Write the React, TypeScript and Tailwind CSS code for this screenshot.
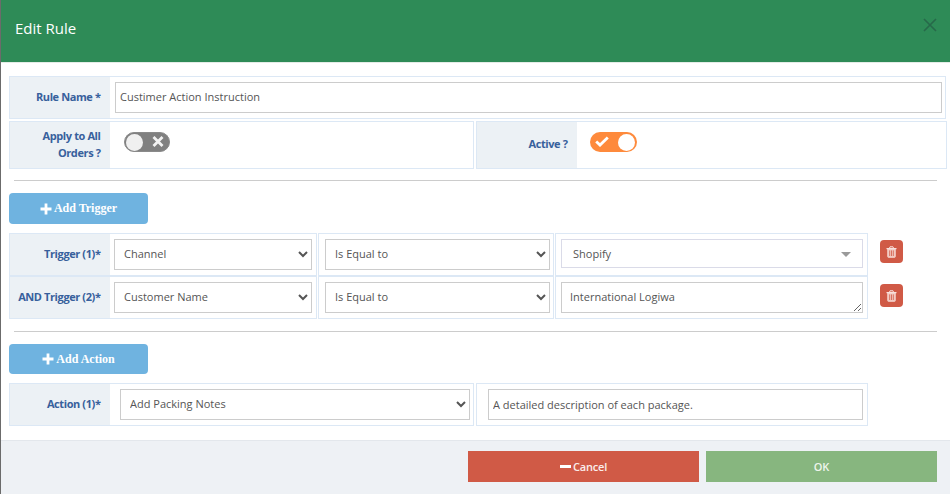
import React from "react";

const OS = "font-['Open_Sans','Noto_Sans',sans-serif]";
const cell = "border border-[#dce8f5] flex bg-white";
const labelC = "w-[100px] shrink-0 bg-[#ecf1f5] text-[11px] leading-[16.5px] font-bold tracking-[-0.4px] text-[#37609c] text-right pr-[9.5px] flex justify-end";
const ctl = "h-full w-full border border-[#cccccc] bg-white text-[11px] text-[#555555] outline-none " + OS;

function Plus() {
  return (
    <svg width="12" height="12" viewBox="0 0 12 12" className="shrink-0">
      <path d="M4.6 0.5h2.8v4.1h4.1v2.8H7.4v4.1H4.6V7.4H0.5V4.6h4.1z" fill="#fff" />
    </svg>
  );
}

function Trash() {
  return (
    <button className="w-[23px] h-[23px] rounded-[4px] bg-[#d05a46] flex items-center justify-center">
      <svg width="11" height="12" viewBox="0 0 11 12" fill="none">
        <path d="M0.5 2.6h10" stroke="#f8e2dd" strokeWidth="1.2" />
        <path d="M3.4 2.4l.6-1.6h3l.6 1.6" stroke="#f8e2dd" strokeWidth="1" />
        <path d="M1.6 3h7.8v7.4c0 .6-.4 1-1 1H2.6c-.6 0-1-.4-1-1z" fill="#f3c9c1" stroke="#f8e2dd" strokeWidth="0.6" />
        <path d="M3.7 4.4v5.6M5.5 4.4v5.6M7.3 4.4v5.6" stroke="#d05a46" strokeWidth="0.8" />
      </svg>
    </button>
  );
}

function AddBtn({ text, h }: { text: string; h: string }) {
  return (
    <button className={h + " w-[139px] rounded-[4px] bg-[#6fb3e0] flex items-center justify-center gap-[2px] text-white text-[12px] font-bold font-['Liberation_Serif',serif]"}>
      <Plus />
      <span className="-mt-[1px]">{text}</span>
    </button>
  );
}

function Sel({ value }: { value: string }) {
  return (
    <select defaultValue={value} className={ctl + " pl-[5px] pb-[2px]"}>
      <option>{value}</option>
    </select>
  );
}

export default function App() {
  return (
    <div className={"w-[950px] h-[494px] overflow-hidden bg-white border-l border-[#6b6b6b] flex flex-col " + OS}>
      <div className="h-[63px] shrink-0 bg-[#2e8b57] border-b border-[#e4ece7] flex items-center justify-between pl-[14px] pr-[13px]">
        <span className="text-white text-[15px] font-medium -mt-[5px]">Edit Rule</span>
        <svg width="14" height="14" viewBox="0 0 14 14" className="-mt-[12px]" stroke="#27694a" strokeWidth="1.6" fill="none">
          <path d="M1 1l12 12M13 1L1 13" />
        </svg>
      </div>

      <div className="flex-1 pl-[8px] pt-[13px] flex flex-col items-start">
        <div className={cell + " w-[937px] h-[43px]"}>
          <div className={labelC + " items-center"}>Rule Name *</div>
          <div className="flex-1 pl-[5px] pr-[3px] py-[5px]">
            <input defaultValue="Custimer Action Instruction" className={ctl + " pl-[4px] pb-[2px]"} />
          </div>
        </div>

        <div className="flex gap-[2px] mt-[2px] h-[48px]">
          <div className={cell + " w-[465px]"}>
            <div className={labelC + " items-start pt-[6px]"}>Apply to All<br />Orders ?</div>
            <div className="pl-[14px] pt-[10px]">
              <div className="w-[46px] h-[20px] rounded-full bg-[#808080] border border-[#8a8a8a] flex items-center justify-between pl-[1px] pr-[5px]">
                <span className="w-[17px] h-[17px] rounded-full bg-[#f0f0f0]" />
                <svg width="12" height="11" viewBox="0 0 12 11" stroke="#f2f2f2" strokeWidth="2.8" fill="none" className="-mt-[2px]">
                  <path d="M1.5 1l9 9M10.5 1l-9 9" />
                </svg>
              </div>
            </div>
          </div>
          <div className={cell + " w-[471px]"}>
            <div className={labelC + " items-center pb-[2px]"}>Active ?</div>
            <div className="pl-[13px] pt-[10px]">
              <div className="w-[47px] h-[20px] rounded-full bg-[#fe8a3c] flex items-center justify-between pl-[5px] pr-[1px]">
                <svg width="14" height="11" viewBox="0 0 14 11" stroke="#fff" strokeWidth="2.8" fill="none" className="-mt-[2px]">
                  <path d="M1.2 5.5l3.8 3.6L12.8 1.4" />
                </svg>
                <span className="w-[17px] h-[17px] rounded-full bg-white mr-[1px]" />
              </div>
            </div>
          </div>
        </div>

        <div className="mt-[11px] ml-[5px] w-[923px] h-px bg-[#cccccc]" />
        <div className="mt-[12px]"><AddBtn text="Add Trigger" h="h-[31px]" /></div>

        <div className="mt-[9px] flex flex-col">
          <div className="flex items-start h-[43px]">
            <div className={cell + " w-[308px] h-[43px]"}>
              <div className={labelC + " items-center"}>Trigger (1)*</div>
              <div className="flex-1 pl-[4px] pr-[4px] py-[5px]"><Sel value="Channel" /></div>
            </div>
            <div className={cell + " w-[236px] h-[43px] ml-[1px]"}>
              <div className="flex-1 pl-[6px] pr-[3px] py-[5px]"><Sel value="Is Equal to" /></div>
            </div>
            <div className={cell + " w-[313px] h-[43px] ml-[1px]"}>
              <div className="flex-1 pl-[5px] pr-[4px] py-[5px]">
                <div className="h-[29px] border border-[#dadbe8] flex items-center justify-between pl-[11px] pr-[11px] pt-[1px] text-[11px] text-[#555555]">
                  <span>Shopify</span>
                  <span className="w-0 h-0 border-x-[5px] border-x-transparent border-t-[5px] border-t-[#9a9a9a]" />
                </div>
              </div>
            </div>
            <div className="ml-[12px] mt-[7px]"><Trash /></div>
          </div>
          <div className="flex items-start h-[43px]">
            <div className={cell + " w-[308px] h-[43px]"}>
              <div className={labelC + " items-center"}>AND Trigger (2)*</div>
              <div className="flex-1 pl-[4px] pr-[4px] py-[5px]"><Sel value="Customer Name" /></div>
            </div>
            <div className={cell + " w-[236px] h-[43px] ml-[1px]"}>
              <div className="flex-1 pl-[6px] pr-[3px] py-[5px]"><Sel value="Is Equal to" /></div>
            </div>
            <div className={cell + " w-[313px] h-[43px] ml-[1px]"}>
              <div className="flex-1 pl-[5px] pr-[4px] py-[5px]">
                <textarea defaultValue="International Logiwa" className={ctl + " block h-[30px] pl-[8px] pt-[6px] leading-[16px] resize-y"} />
              </div>
            </div>
            <div className="ml-[12px] mt-[8px]"><Trash /></div>
          </div>
        </div>

        <div className="mt-[12px] ml-[5px] w-[923px] h-px bg-[#cccccc]" />
        <div className="mt-[12px]"><AddBtn text="Add Action" h="h-[30px]" /></div>

        <div className="flex gap-[2px] mt-[9px] h-[43px]">
          <div className={cell + " w-[465px]"}>
            <div className={labelC + " items-center"}>Action (1)*</div>
            <div className="flex-1 pl-[10px] pr-[3px] py-[5px]"><Sel value="Add Packing Notes" /></div>
          </div>
          <div className={cell + " w-[392px]"}>
            <div className="flex-1 pl-[11px] pr-[4px] py-[5px]">
              <input defaultValue="A detailed description of each package." className={ctl + " pl-[4px]"} />
            </div>
          </div>
        </div>
      </div>

      <div className="h-[54px] shrink-0 bg-[#eef1f5] border-t border-[#e3e7ec] flex items-start justify-end gap-[7px] pt-[10px] pr-[13px]">
        <button className="w-[231px] h-[31px] bg-[#d05a46] text-[#fbeeeb] text-[11px] font-semibold tracking-[-0.2px] pt-[1px] flex items-center justify-center gap-[2px]">
          <span className="w-[11px] h-[3px] bg-white -mt-[1px]" />Cancel
        </button>
        <button className="w-[231px] h-[31px] bg-[#87b67f] text-[#eef5ec] text-[11px] font-semibold pt-[1px] flex items-center justify-center">OK</button>
      </div>
    </div>
  );
}
